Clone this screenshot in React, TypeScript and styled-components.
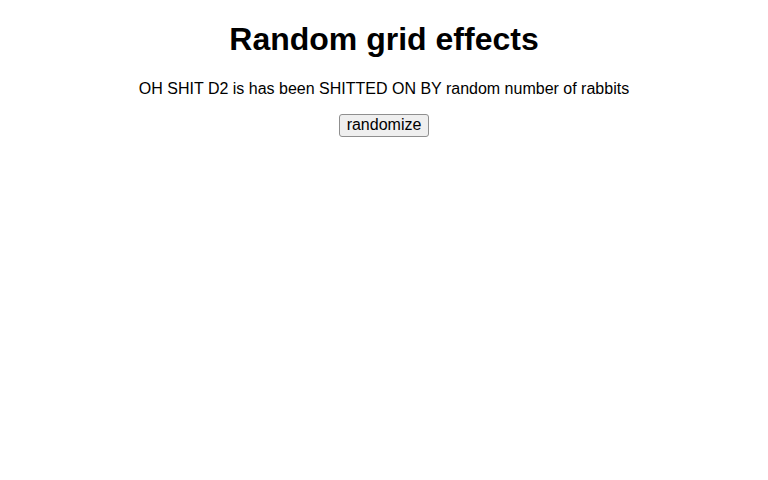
import React, { useState } from 'react';
import styled, { createGlobalStyle } from 'styled-components';

const GlobalStyle = createGlobalStyle`
  body {
    margin: 8px;
    background: #fff;
    color: #000;
    font-family: "Liberation Sans", Arial, sans-serif;
  }
`;

const App: React.FC = () => {
  // сколько кроликов насело на D2
  const [rabbits, setRabbits] = useState<number | null>(null);

  return (
    <Wrapper>
      <GlobalStyle />
      <Title>Random grid effects</Title>
      <Message>
        OH SHIT D2 is has been SHITTED ON BY random number of rabbits
      </Message>
      <RandomButton
        type="button"
        title={rabbits === null ? undefined : String(rabbits)}
        onClick={() => setRabbits(Math.floor(Math.random() * 100))}
      >
        randomize
      </RandomButton>
    </Wrapper>
  );
};

export default App;

const Wrapper = styled.div`
  text-align: center;
`;

const Title = styled.h1`
  font-size: 32px;
  font-weight: bold;
  margin: 13px 0 22px;
`;

const Message = styled.p`
  font-size: 16px;
  margin: 16px 0;
`;

const RandomButton = styled.button`
  font-family: "Liberation Sans", Arial, sans-serif;
  font-size: 16px;
  padding: 1px 7px 2px;
  color: #000;
  background: #efefef;
  border: 1px solid #8f8f8f;
  border-radius: 3px;
  cursor: pointer;
`;
